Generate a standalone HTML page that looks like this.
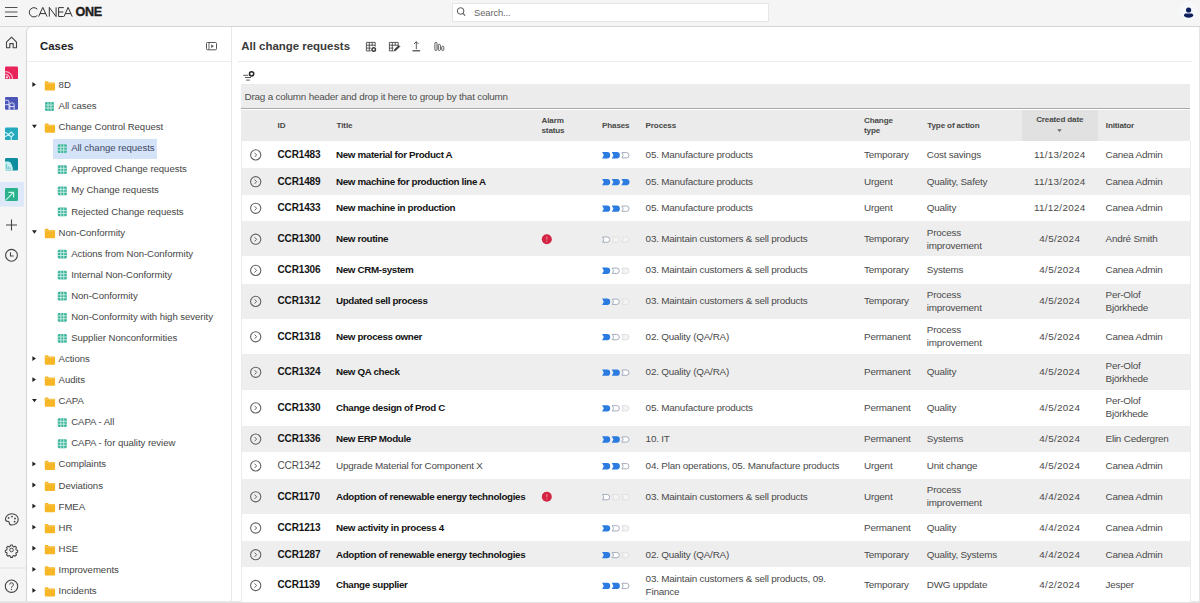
<!DOCTYPE html><html><head><meta charset="utf-8"><style>
*{box-sizing:border-box}
html,body{margin:0;padding:0}
body{width:1200px;height:603px;overflow:hidden;position:relative;background:#f5f5f5;font-family:"Liberation Sans",sans-serif;color:#444}
.a{position:absolute}
.t{position:absolute;white-space:nowrap;font-size:9.6px;line-height:12px;color:#484848;letter-spacing:-0.05px}
.c{position:absolute;white-space:nowrap;font-size:9.9px;line-height:13px;color:#4a4a4a;letter-spacing:-0.2px}
.b{font-weight:bold;color:#141414}
.tt{letter-spacing:-0.35px;font-size:9.8px}
.id{letter-spacing:-0.15px;font-size:10px}
.h{position:absolute;white-space:nowrap;font-size:8.1px;line-height:10px;font-weight:bold;color:#484848;letter-spacing:-0.15px}
.row{position:absolute;left:241px;width:949px}
.g{background:#eeeeee}
.w{background:#ffffff}
svg{position:absolute;overflow:visible}
</style></head><body>

<div class="a" style="left:0;top:0;width:1200px;height:26px;background:#f5f5f5"></div>
<div class="a" style="left:0;top:26px;width:1200px;height:1px;background:#d9d9d9"></div>
<svg style="left:0;top:0" width="30" height="26"><path d="M5 7.5h12.5M5 12h12.5M5 16.5h12.5" stroke="#505050" stroke-width="1.1"/></svg>
<svg style="left:0;top:0" width="120" height="26"><g fill="none" stroke="#2a2a2a" stroke-width="0.95"><path d="M37.3 9.2a4.6 4.6 0 1 0 0 6.2"/><path d="M38.6 16.6l4.2-9.2 4.2 9.2M40 13.6h5.6"/><path d="M49.3 16.6V7.4l6.8 9.2V7.4"/><path d="M63.8 7.6H58.6v8.9h5M58.6 12h4.7"/><path d="M64 16.6l4.1-9.2 4.1 9.2M65.4 13.6h5.4"/></g></svg>
<div class="a" style="left:75.5px;top:4px;font-size:12.6px;line-height:16px;font-weight:bold;color:#1e1e1e;letter-spacing:-0.3px;-webkit-text-stroke:0.35px #1e1e1e">ONE</div>
<div class="a" style="left:452px;top:3px;width:317px;height:18.5px;background:#fff;border:1px solid #e6e6e6"></div>
<svg style="left:0;top:0" width="1" height="1"><circle cx="460.6" cy="11" r="3.3" fill="none" stroke="#555" stroke-width="1"/><path d="M463 13.4l2.2 2.2" stroke="#555" stroke-width="1.1"/></svg>
<div class="a" style="left:474px;top:6.8px;font-size:9.4px;line-height:12px;color:#666;letter-spacing:-0.1px">Search...</div>
<svg style="left:0;top:0" width="1" height="1"><circle cx="1188.6" cy="11.3" r="9" fill="#f6f8fc"/><circle cx="1188.6" cy="10" r="2.6" fill="#0d1f5c"/><path d="M1184 15.3c0-1.2 1-1.8 2-1.8h5.2c1 0 2 .6 2 1.8 0 1.6-2 2.4-4.6 2.4s-4.6-.8-4.6-2.4z" fill="#0d1f5c"/></svg>
<svg style="left:0;top:0" width="1" height="1"><path d="M6.5 42.2l5-5 5 5v5.6h-3.3v-4.2h-3.4v4.2H6.5z" fill="none" stroke="#444" stroke-width="1.1" stroke-linejoin="round"/><rect x="5" y="66.5" width="13" height="12.6" rx="1.2" fill="#e8235a"/><path d="M5.2 71.6a7.2 7.2 0 0 1 7.3 7.3M5.2 74.4a4.4 4.4 0 0 1 4.5 4.5" fill="none" stroke="#f7b3c6" stroke-width="1.1"/><circle cx="6.9" cy="77.3" r="1.15" fill="#fbe3ea"/><rect x="5" y="97" width="13" height="12.7" rx="1.2" fill="#4a55b5"/><path d="M5.2 100.3h2.3a1.5 1.5 0 0 1 1.5 1.5v7.9M5.2 104.7h3.8M9.8 109.7v-5.2a1.5 1.5 0 0 1 1.5-1.5h1.3a1.5 1.5 0 0 1 1.5 1.5v5.2M9.8 106.6h4.3" fill="none" stroke="#dfe2fb" stroke-width="1"/><rect x="5" y="127.5" width="13" height="12.6" rx="1.2" fill="#26a8bd"/><path d="M5.2 132.2l3.4 2.3-3.4 2.3M8.6 134.5l2.6-2.5 2.6 2.5-2.6 2.5zM11.2 137v3" fill="none" stroke="#c9f4f8" stroke-width="1.15"/><rect x="5" y="158" width="13" height="12.5" rx="1.2" fill="#0f8c9e"/><path d="M5 161.6h3.6a5.2 8.9 0 0 1 4.4 8.9H5z" fill="#c2eef0"/><path d="M6.4 164v5M8.2 166.3v3.2M10.1 167.5v2" stroke="#5bb3bd" stroke-width="0.8"/><rect x="0" y="182" width="24" height="24.5" fill="#dde8f8"/><rect x="5" y="188" width="13" height="13" rx="1.2" fill="#2bb28c"/><path d="M8.3 192.3h5.3v5.3" fill="none" stroke="#c8f5e6" stroke-width="1.2"/><path d="M5.6 200.3l7.6-7.6" stroke="#c8f5e6" stroke-width="1.2"/><path d="M11.5 219.5v11M6 225h11" stroke="#444" stroke-width="1.1"/><circle cx="11.5" cy="255.3" r="5.9" fill="none" stroke="#444" stroke-width="1.1"/><path d="M10.5 252.3v3.7h3.2" fill="none" stroke="#444" stroke-width="1.1"/><path d="M11.8 513.8c-3.6 0-6.3 2.6-6.3 5.4 0 1.5 1 2.2 2.2 2.2 1.1 0 1.6.8 1.6 1.6 0 1.3 1 2 2.6 2 3.5 0 6.3-2.5 6.3-5.6s-2.8-5.6-6.4-5.6z" fill="none" stroke="#444" stroke-width="1.1"/><circle cx="8.6" cy="517.9" r="0.9" fill="#444"/><circle cx="12" cy="516.6" r="0.9" fill="#444"/><circle cx="15" cy="518.5" r="0.9" fill="#444"/><circle cx="14.6" cy="521.7" r="0.9" fill="#444"/><g transform="translate(11.5 550) scale(0.82)"><path d="M-1.2-6h2.4l.4 1.7 1.3.6 1.5-.9 1.7 1.7-.9 1.5.6 1.3 1.7.4v2.4l-1.7.4-.6 1.3.9 1.5-1.7 1.7-1.5-.9-1.3.6-.4 1.7h-2.4l-.4-1.7-1.3-.6-1.5.9-1.7-1.7.9-1.5-.6-1.3-1.7-.4v-2.4l1.7-.4.6-1.3-.9-1.5 1.7-1.7 1.5.9 1.3-.6z" fill="none" stroke="#444" stroke-width="1.25" stroke-linejoin="round"/><circle r="2.2" fill="none" stroke="#444" stroke-width="1.2"/></g><rect x="0" y="567.5" width="26" height="1" fill="#e2e2e2"/><circle cx="11.5" cy="586.2" r="6.2" fill="none" stroke="#444" stroke-width="1.1"/><path d="M9.6 584.6a1.9 1.9 0 1 1 2.6 1.8c-.5.2-.7.5-.7 1v.6" fill="none" stroke="#444" stroke-width="1"/><circle cx="11.5" cy="589.4" r="0.65" fill="#444"/></svg>
<div class="a" style="left:26px;top:26px;width:1180px;height:580px;background:#fff;border:1px solid #d6d6d6;border-radius:6px 0 0 0"></div>
<div class="a" style="left:1198.5px;top:27px;width:1px;height:576px;background:#e4e4e4"></div>
<div class="a" style="left:0;top:601px;width:1200px;height:2px;background:#e6e6e6"></div>
<div class="a" style="left:40px;top:38px;font-size:11.4px;line-height:16px;font-weight:bold;color:#1e1e1e">Cases</div>
<svg style="left:0;top:0" width="1" height="1"><rect x="206.5" y="42.5" width="10" height="7.3" rx="1" fill="none" stroke="#555" stroke-width="1"/><path d="M209 43v6.5" stroke="#555" stroke-width="0.9"/><path d="M211.2 44.3l2.7 1.9-2.7 1.9z" fill="#555"/></svg>
<div class="a" style="left:27px;top:61px;width:205px;height:1px;background:#ececec"></div>
<div class="a" style="left:231.3px;top:27px;width:1px;height:576px;background:#e8e8e8"></div>
<div class="a" style="left:52.5px;top:138.5px;width:104.5px;height:20px;background:#d5e3f8"></div>
<div class="t" style="left:58.6px;top:79.0px;color:#454545">8D</div>
<div class="t" style="left:58.6px;top:100.1px;color:#454545">All cases</div>
<div class="t" style="left:58.6px;top:121.2px;color:#454545">Change Control Request</div>
<div class="t" style="left:71.2px;top:142.2px;color:#3d4763">All change requests</div>
<div class="t" style="left:71.2px;top:163.3px;color:#454545">Approved Change requests</div>
<div class="t" style="left:71.2px;top:184.4px;color:#454545">My Change requests</div>
<div class="t" style="left:71.2px;top:205.5px;color:#454545">Rejected Change requests</div>
<div class="t" style="left:58.6px;top:226.6px;color:#454545">Non-Conformity</div>
<div class="t" style="left:71.2px;top:247.6px;color:#454545">Actions from Non-Conformity</div>
<div class="t" style="left:71.2px;top:268.7px;color:#454545">Internal Non-Conformity</div>
<div class="t" style="left:71.2px;top:289.8px;color:#454545">Non-Conformity</div>
<div class="t" style="left:71.2px;top:310.9px;color:#454545">Non-Conformity with high severity</div>
<div class="t" style="left:71.2px;top:332.0px;color:#454545">Supplier Nonconformities</div>
<div class="t" style="left:58.6px;top:353.0px;color:#454545">Actions</div>
<div class="t" style="left:58.6px;top:374.1px;color:#454545">Audits</div>
<div class="t" style="left:58.6px;top:395.2px;color:#454545">CAPA</div>
<div class="t" style="left:71.2px;top:416.3px;color:#454545">CAPA - All</div>
<div class="t" style="left:71.2px;top:437.4px;color:#454545">CAPA - for quality review</div>
<div class="t" style="left:58.6px;top:458.4px;color:#454545">Complaints</div>
<div class="t" style="left:58.6px;top:479.5px;color:#454545">Deviations</div>
<div class="t" style="left:58.6px;top:500.6px;color:#454545">FMEA</div>
<div class="t" style="left:58.6px;top:521.7px;color:#454545">HR</div>
<div class="t" style="left:58.6px;top:542.8px;color:#454545">HSE</div>
<div class="t" style="left:58.6px;top:563.8px;color:#454545">Improvements</div>
<div class="t" style="left:58.6px;top:584.9px;color:#454545">Incidents</div>
<svg style="left:0;top:0" width="1" height="1"><path d="M44.8 81.3h3l1.1 1.2h5.2a1 1 0 0 1 1 1v6.1a1 1 0 0 1-1 1h-8.3a1 1 0 0 1-1-1v-7.3a1 1 0 0 1 1-1z" fill="#f6b626"/><path d="M44.099999999999994 83.3h9.9" stroke="#fbd37a" stroke-width="0.6"/><path d="M32.4 82.1l3.6 2.4-3.6 2.4z" fill="#222"/><rect x="45" y="102.08" width="9" height="8.8" rx="1.3" fill="#3bb59b"/><path d="M48.05 102.08v8.8M50.95 102.08v8.8M45 105.06h9M45 107.96h9" stroke="#e6f7f2" stroke-width="0.75"/><path d="M44.8 123.46h3l1.1 1.2h5.2a1 1 0 0 1 1 1v6.1a1 1 0 0 1-1 1h-8.3a1 1 0 0 1-1-1v-7.3a1 1 0 0 1 1-1z" fill="#f6b626"/><path d="M44.099999999999994 125.46h9.9" stroke="#fbd37a" stroke-width="0.6"/><path d="M32 124.86h4.8l-2.4 3.4z" fill="#222"/><rect x="57.8" y="144.24" width="9" height="8.8" rx="1.3" fill="#3bb59b"/><path d="M60.849999999999994 144.24v8.8M63.75 144.24v8.8M57.8 147.22h9M57.8 150.12h9" stroke="#e6f7f2" stroke-width="0.75"/><rect x="57.8" y="165.32" width="9" height="8.8" rx="1.3" fill="#3bb59b"/><path d="M60.849999999999994 165.32v8.8M63.75 165.32v8.8M57.8 168.30h9M57.8 171.20h9" stroke="#e6f7f2" stroke-width="0.75"/><rect x="57.8" y="186.40" width="9" height="8.8" rx="1.3" fill="#3bb59b"/><path d="M60.849999999999994 186.40v8.8M63.75 186.40v8.8M57.8 189.38h9M57.8 192.28h9" stroke="#e6f7f2" stroke-width="0.75"/><rect x="57.8" y="207.48" width="9" height="8.8" rx="1.3" fill="#3bb59b"/><path d="M60.849999999999994 207.48v8.8M63.75 207.48v8.8M57.8 210.46h9M57.8 213.36h9" stroke="#e6f7f2" stroke-width="0.75"/><path d="M44.8 228.86h3l1.1 1.2h5.2a1 1 0 0 1 1 1v6.1a1 1 0 0 1-1 1h-8.3a1 1 0 0 1-1-1v-7.3a1 1 0 0 1 1-1z" fill="#f6b626"/><path d="M44.099999999999994 230.86h9.9" stroke="#fbd37a" stroke-width="0.6"/><path d="M32 230.26h4.8l-2.4 3.4z" fill="#222"/><rect x="57.8" y="249.64" width="9" height="8.8" rx="1.3" fill="#3bb59b"/><path d="M60.849999999999994 249.64v8.8M63.75 249.64v8.8M57.8 252.62h9M57.8 255.52h9" stroke="#e6f7f2" stroke-width="0.75"/><rect x="57.8" y="270.72" width="9" height="8.8" rx="1.3" fill="#3bb59b"/><path d="M60.849999999999994 270.72v8.8M63.75 270.72v8.8M57.8 273.70h9M57.8 276.60h9" stroke="#e6f7f2" stroke-width="0.75"/><rect x="57.8" y="291.80" width="9" height="8.8" rx="1.3" fill="#3bb59b"/><path d="M60.849999999999994 291.80v8.8M63.75 291.80v8.8M57.8 294.78h9M57.8 297.68h9" stroke="#e6f7f2" stroke-width="0.75"/><rect x="57.8" y="312.88" width="9" height="8.8" rx="1.3" fill="#3bb59b"/><path d="M60.849999999999994 312.88v8.8M63.75 312.88v8.8M57.8 315.86h9M57.8 318.76h9" stroke="#e6f7f2" stroke-width="0.75"/><rect x="57.8" y="333.96" width="9" height="8.8" rx="1.3" fill="#3bb59b"/><path d="M60.849999999999994 333.96v8.8M63.75 333.96v8.8M57.8 336.94h9M57.8 339.84h9" stroke="#e6f7f2" stroke-width="0.75"/><path d="M44.8 355.34h3l1.1 1.2h5.2a1 1 0 0 1 1 1v6.1a1 1 0 0 1-1 1h-8.3a1 1 0 0 1-1-1v-7.3a1 1 0 0 1 1-1z" fill="#f6b626"/><path d="M44.099999999999994 357.34h9.9" stroke="#fbd37a" stroke-width="0.6"/><path d="M32.4 356.14l3.6 2.4-3.6 2.4z" fill="#222"/><path d="M44.8 376.42h3l1.1 1.2h5.2a1 1 0 0 1 1 1v6.1a1 1 0 0 1-1 1h-8.3a1 1 0 0 1-1-1v-7.3a1 1 0 0 1 1-1z" fill="#f6b626"/><path d="M44.099999999999994 378.42h9.9" stroke="#fbd37a" stroke-width="0.6"/><path d="M32.4 377.22l3.6 2.4-3.6 2.4z" fill="#222"/><path d="M44.8 397.5h3l1.1 1.2h5.2a1 1 0 0 1 1 1v6.1a1 1 0 0 1-1 1h-8.3a1 1 0 0 1-1-1v-7.3a1 1 0 0 1 1-1z" fill="#f6b626"/><path d="M44.099999999999994 399.5h9.9" stroke="#fbd37a" stroke-width="0.6"/><path d="M32 398.9h4.8l-2.4 3.4z" fill="#222"/><rect x="57.8" y="418.28" width="9" height="8.8" rx="1.3" fill="#3bb59b"/><path d="M60.849999999999994 418.28v8.8M63.75 418.28v8.8M57.8 421.26h9M57.8 424.16h9" stroke="#e6f7f2" stroke-width="0.75"/><rect x="57.8" y="439.36" width="9" height="8.8" rx="1.3" fill="#3bb59b"/><path d="M60.849999999999994 439.36v8.8M63.75 439.36v8.8M57.8 442.34h9M57.8 445.24h9" stroke="#e6f7f2" stroke-width="0.75"/><path d="M44.8 460.73999999999995h3l1.1 1.2h5.2a1 1 0 0 1 1 1v6.1a1 1 0 0 1-1 1h-8.3a1 1 0 0 1-1-1v-7.3a1 1 0 0 1 1-1z" fill="#f6b626"/><path d="M44.099999999999994 462.73999999999995h9.9" stroke="#fbd37a" stroke-width="0.6"/><path d="M32.4 461.53999999999996l3.6 2.4-3.6 2.4z" fill="#222"/><path d="M44.8 481.82h3l1.1 1.2h5.2a1 1 0 0 1 1 1v6.1a1 1 0 0 1-1 1h-8.3a1 1 0 0 1-1-1v-7.3a1 1 0 0 1 1-1z" fill="#f6b626"/><path d="M44.099999999999994 483.82h9.9" stroke="#fbd37a" stroke-width="0.6"/><path d="M32.4 482.62l3.6 2.4-3.6 2.4z" fill="#222"/><path d="M44.8 502.9h3l1.1 1.2h5.2a1 1 0 0 1 1 1v6.1a1 1 0 0 1-1 1h-8.3a1 1 0 0 1-1-1v-7.3a1 1 0 0 1 1-1z" fill="#f6b626"/><path d="M44.099999999999994 504.9h9.9" stroke="#fbd37a" stroke-width="0.6"/><path d="M32.4 503.7l3.6 2.4-3.6 2.4z" fill="#222"/><path d="M44.8 523.9799999999999h3l1.1 1.2h5.2a1 1 0 0 1 1 1v6.1a1 1 0 0 1-1 1h-8.3a1 1 0 0 1-1-1v-7.3a1 1 0 0 1 1-1z" fill="#f6b626"/><path d="M44.099999999999994 525.9799999999999h9.9" stroke="#fbd37a" stroke-width="0.6"/><path d="M32.4 524.78l3.6 2.4-3.6 2.4z" fill="#222"/><path d="M44.8 545.06h3l1.1 1.2h5.2a1 1 0 0 1 1 1v6.1a1 1 0 0 1-1 1h-8.3a1 1 0 0 1-1-1v-7.3a1 1 0 0 1 1-1z" fill="#f6b626"/><path d="M44.099999999999994 547.06h9.9" stroke="#fbd37a" stroke-width="0.6"/><path d="M32.4 545.86l3.6 2.4-3.6 2.4z" fill="#222"/><path d="M44.8 566.1399999999999h3l1.1 1.2h5.2a1 1 0 0 1 1 1v6.1a1 1 0 0 1-1 1h-8.3a1 1 0 0 1-1-1v-7.3a1 1 0 0 1 1-1z" fill="#f6b626"/><path d="M44.099999999999994 568.1399999999999h9.9" stroke="#fbd37a" stroke-width="0.6"/><path d="M32.4 566.9399999999999l3.6 2.4-3.6 2.4z" fill="#222"/><path d="M44.8 587.2199999999999h3l1.1 1.2h5.2a1 1 0 0 1 1 1v6.1a1 1 0 0 1-1 1h-8.3a1 1 0 0 1-1-1v-7.3a1 1 0 0 1 1-1z" fill="#f6b626"/><path d="M44.099999999999994 589.2199999999999h9.9" stroke="#fbd37a" stroke-width="0.6"/><path d="M32.4 588.02l3.6 2.4-3.6 2.4z" fill="#222"/></svg>
<div class="a" style="left:241.3px;top:38px;font-size:11.45px;line-height:16px;font-weight:bold;color:#3a3a3a">All change requests</div>
<svg style="left:0;top:0" width="1" height="1"><g fill="none" stroke="#3e3e3e" stroke-width="0.85"><path d="M366.4 42.4h8.8v4.2M366.4 42.4v8.5h4.4M366.4 45.2h8.8M366.4 48.1h4.4M369.3 42.4v8.5M372.2 42.4v3.5"/><circle cx="373.7" cy="49.4" r="1.75" stroke-width="1.5"/><path d="M389.4 42.4h8.8v3.6M389.4 42.4v8.5h4.2M389.4 45.2h8.8M389.4 48.1h4M392.3 42.4v8.5M395.2 42.4v3"/><path d="M394.2 51l.5-1.7 4-4 1.2 1.2-4 4z" fill="#3e3e3e" stroke-width="0.6"/><path d="M416.3 49.2v-7.4M414 44l2.3-2.3 2.3 2.3"/><path d="M412.5 50.8h7.6" stroke-width="1.2"/><rect x="434.9" y="42.3" width="2.1" height="8.2" rx="1"/><rect x="438.3" y="44.3" width="2.1" height="6.2" rx="1"/><rect x="441.7" y="46.3" width="2.1" height="4.2" rx="1"/></g></svg>
<div class="a" style="left:238px;top:61px;width:954px;height:1px;background:#ececec"></div>
<svg style="left:0;top:0" width="1" height="1"><g stroke="#555" stroke-width="0.9" fill="none"><path d="M243.3 75.3h5M245 77.5h6M246.2 80.1h3.6" stroke-width="1"/><circle cx="251.6" cy="73.8" r="2.1" stroke-width="1.5" stroke="#222"/></g></svg>
<div class="a" style="left:241px;top:84.3px;width:949px;height:25px;background:#ececec;border-bottom:1px solid #a8a8a8"></div>
<div class="c" style="left:244.5px;top:89.7px;color:#4e4e4e">Drag a column header and drop it here to group by that column</div>
<div class="a" style="left:241px;top:109.5px;width:949px;height:31.5px;background:#ebebeb"></div>
<div class="a" style="left:1022px;top:109.5px;width:75.5px;height:31.5px;background:#e1e1e1"></div>
<div class="h" style="left:277.6px;top:120.8px">ID</div>
<div class="h" style="left:336.6px;top:120.8px">Title</div>
<div class="h" style="left:541.5px;top:115.6px">Alarm<br>status</div>
<div class="h" style="left:602px;top:120.8px">Phases</div>
<div class="h" style="left:645.6px;top:120.8px">Process</div>
<div class="h" style="left:864px;top:115.6px">Change<br>type</div>
<div class="h" style="left:927.3px;top:120.8px">Type of action</div>
<div class="h" style="left:1105.8px;top:120.8px">Initiator</div>
<div class="h" style="left:1022px;width:75.5px;text-align:center;top:115px">Created date</div>
<svg style="left:0;top:0" width="1" height="1"><path d="M1057.3 129.2h4.4l-2.2 2.8z" fill="#666"/></svg>
<div class="row w" style="top:141px;height:27px"></div>
<div class="c b id" style="left:277.5px;top:147.7px">CCR1483</div>
<div class="c b tt" style="left:336px;top:147.7px">New material for Product A</div>
<div class="c" style="left:645.6px;top:147.7px">05. Manufacture products</div>
<div class="c" style="left:864px;top:147.7px">Temporary</div>
<div class="c" style="left:926.8px;top:147.7px">Cost savings</div>
<div class="c" style="left:1022px;width:75.5px;text-align:center;letter-spacing:0.3px;top:147.7px">11/13/2024</div>
<div class="c" style="left:1105.5px;top:147.7px">Canea Admin</div>
<svg style="left:0;top:0" width="1" height="1"><circle cx="255.7" cy="154.9" r="5.1" fill="none" stroke="#646464" stroke-width="1.1"/><path d="M254.6 152.8l2 2.1-2 2.1" fill="none" stroke="#646464" stroke-width="1"/><path d="M602.10 152.10h5.1a3 3.15 0 0 1 0 6.3H602.10l1.7-3.15z" fill="#2b7be0"/><path d="M611.75 152.10h5.1a3 3.15 0 0 1 0 6.3H611.75l1.7-3.15z" fill="#2b7be0"/><path d="M621.90 152.60h4.6a2.5 2.65 0 0 1 0 5.3H621.90l1.3-2.65z" fill="#fff" stroke="#a3adbd" stroke-width="1"/></svg>
<div class="row g" style="top:168px;height:26.599999999999994px"></div>
<div class="c b id" style="left:277.5px;top:174.5px">CCR1489</div>
<div class="c b tt" style="left:336px;top:174.5px">New machine for production line A</div>
<div class="c" style="left:645.6px;top:174.5px">05. Manufacture products</div>
<div class="c" style="left:864px;top:174.5px">Urgent</div>
<div class="c" style="left:926.8px;top:174.5px">Quality, Safety</div>
<div class="c" style="left:1022px;width:75.5px;text-align:center;letter-spacing:0.3px;top:174.5px">11/13/2024</div>
<div class="c" style="left:1105.5px;top:174.5px">Canea Admin</div>
<svg style="left:0;top:0" width="1" height="1"><circle cx="255.7" cy="181.7" r="5.1" fill="none" stroke="#646464" stroke-width="1.1"/><path d="M254.6 179.6l2 2.1-2 2.1" fill="none" stroke="#646464" stroke-width="1"/><path d="M602.10 178.90h5.1a3 3.15 0 0 1 0 6.3H602.10l1.7-3.15z" fill="#2b7be0"/><path d="M611.75 178.90h5.1a3 3.15 0 0 1 0 6.3H611.75l1.7-3.15z" fill="#2b7be0"/><path d="M621.40 178.90h5.1a3 3.15 0 0 1 0 6.3H621.40l1.7-3.15z" fill="#2b7be0"/></svg>
<div class="row w" style="top:194.6px;height:26.599999999999994px"></div>
<div class="c b id" style="left:277.5px;top:201.1px">CCR1433</div>
<div class="c b tt" style="left:336px;top:201.1px">New machine in production</div>
<div class="c" style="left:645.6px;top:201.1px">05. Manufacture products</div>
<div class="c" style="left:864px;top:201.1px">Urgent</div>
<div class="c" style="left:926.8px;top:201.1px">Quality</div>
<div class="c" style="left:1022px;width:75.5px;text-align:center;letter-spacing:0.3px;top:201.1px">11/12/2024</div>
<div class="c" style="left:1105.5px;top:201.1px">Canea Admin</div>
<svg style="left:0;top:0" width="1" height="1"><circle cx="255.7" cy="208.3" r="5.1" fill="none" stroke="#646464" stroke-width="1.1"/><path d="M254.6 206.2l2 2.1-2 2.1" fill="none" stroke="#646464" stroke-width="1"/><path d="M602.10 205.50h5.1a3 3.15 0 0 1 0 6.3H602.10l1.7-3.15z" fill="#2b7be0"/><path d="M611.75 205.50h5.1a3 3.15 0 0 1 0 6.3H611.75l1.7-3.15z" fill="#2b7be0"/><path d="M621.90 206.00h4.6a2.5 2.65 0 0 1 0 5.3H621.90l1.3-2.65z" fill="#fff" stroke="#a3adbd" stroke-width="1"/></svg>
<div class="row g" style="top:221.2px;height:35.30000000000001px"></div>
<div class="c b id" style="left:277.5px;top:232.0px">CCR1300</div>
<div class="c b tt" style="left:336px;top:232.0px">New routine</div>
<div class="c" style="left:645.6px;top:232.0px">03. Maintain customers &amp; sell products</div>
<div class="c" style="left:864px;top:232.0px">Temporary</div>
<div class="c" style="left:926.8px;top:225.5px">Process<br>improvement</div>
<div class="c" style="left:1022px;width:75.5px;text-align:center;letter-spacing:0.3px;top:232.0px">4/5/2024</div>
<div class="c" style="left:1105.5px;top:232.0px">Andr&eacute; Smith</div>
<svg style="left:0;top:0" width="1" height="1"><circle cx="255.7" cy="239.2" r="5.1" fill="none" stroke="#646464" stroke-width="1.1"/><path d="M254.6 237.2l2 2.1-2 2.1" fill="none" stroke="#646464" stroke-width="1"/><circle cx="546.8" cy="239.2" r="5" fill="#d42443"/><path d="M546.8 236.5v2.9" stroke="#f27d93" stroke-width="1.2"/><circle cx="546.8" cy="241.2" r="0.65" fill="#f27d93"/><path d="M602.60 236.95h4.6a2.5 2.65 0 0 1 0 5.3H602.60l1.3-2.65z" fill="#fff" stroke="#a3adbd" stroke-width="1"/><path d="M612.25 236.95h4.6a2.5 2.65 0 0 1 0 5.3H612.25l1.3-2.65z" fill="#f4f4f4" stroke="#e0e0e0" stroke-width="1"/><path d="M621.90 236.95h4.6a2.5 2.65 0 0 1 0 5.3H621.90l1.3-2.65z" fill="#f4f4f4" stroke="#e0e0e0" stroke-width="1"/></svg>
<div class="row w" style="top:256.5px;height:27.0px"></div>
<div class="c b id" style="left:277.5px;top:263.2px">CCR1306</div>
<div class="c b tt" style="left:336px;top:263.2px">New CRM-system</div>
<div class="c" style="left:645.6px;top:263.2px">03. Maintain customers &amp; sell products</div>
<div class="c" style="left:864px;top:263.2px">Temporary</div>
<div class="c" style="left:926.8px;top:263.2px">Systems</div>
<div class="c" style="left:1022px;width:75.5px;text-align:center;letter-spacing:0.3px;top:263.2px">4/5/2024</div>
<div class="c" style="left:1105.5px;top:263.2px">Canea Admin</div>
<svg style="left:0;top:0" width="1" height="1"><circle cx="255.7" cy="270.4" r="5.1" fill="none" stroke="#646464" stroke-width="1.1"/><path d="M254.6 268.3l2 2.1-2 2.1" fill="none" stroke="#646464" stroke-width="1"/><path d="M602.10 267.60h5.1a3 3.15 0 0 1 0 6.3H602.10l1.7-3.15z" fill="#2b7be0"/><path d="M612.25 268.10h4.6a2.5 2.65 0 0 1 0 5.3H612.25l1.3-2.65z" fill="#fff" stroke="#a3adbd" stroke-width="1"/><path d="M621.90 268.10h4.6a2.5 2.65 0 0 1 0 5.3H621.90l1.3-2.65z" fill="#f4f4f4" stroke="#e0e0e0" stroke-width="1"/></svg>
<div class="row g" style="top:283.5px;height:35.0px"></div>
<div class="c b id" style="left:277.5px;top:294.2px">CCR1312</div>
<div class="c b tt" style="left:336px;top:294.2px">Updated sell process</div>
<div class="c" style="left:645.6px;top:294.2px">03. Maintain customers &amp; sell products</div>
<div class="c" style="left:864px;top:294.2px">Temporary</div>
<div class="c" style="left:926.8px;top:287.7px">Process<br>improvement</div>
<div class="c" style="left:1022px;width:75.5px;text-align:center;letter-spacing:0.3px;top:294.2px">4/5/2024</div>
<div class="c" style="left:1105.5px;top:287.7px">Per-Olof<br>Bj&ouml;rkhede</div>
<svg style="left:0;top:0" width="1" height="1"><circle cx="255.7" cy="301.4" r="5.1" fill="none" stroke="#646464" stroke-width="1.1"/><path d="M254.6 299.3l2 2.1-2 2.1" fill="none" stroke="#646464" stroke-width="1"/><path d="M602.10 298.60h5.1a3 3.15 0 0 1 0 6.3H602.10l1.7-3.15z" fill="#2b7be0"/><path d="M612.25 299.10h4.6a2.5 2.65 0 0 1 0 5.3H612.25l1.3-2.65z" fill="#fff" stroke="#a3adbd" stroke-width="1"/><path d="M621.90 299.10h4.6a2.5 2.65 0 0 1 0 5.3H621.90l1.3-2.65z" fill="#f4f4f4" stroke="#e0e0e0" stroke-width="1"/></svg>
<div class="row w" style="top:318.5px;height:35.69999999999999px"></div>
<div class="c b id" style="left:277.5px;top:329.6px">CCR1318</div>
<div class="c b tt" style="left:336px;top:329.6px">New process owner</div>
<div class="c" style="left:645.6px;top:329.6px">02. Quality (QA/RA)</div>
<div class="c" style="left:864px;top:329.6px">Permanent</div>
<div class="c" style="left:926.8px;top:323.1px">Process<br>improvement</div>
<div class="c" style="left:1022px;width:75.5px;text-align:center;letter-spacing:0.3px;top:329.6px">4/5/2024</div>
<div class="c" style="left:1105.5px;top:329.6px">Canea Admin</div>
<svg style="left:0;top:0" width="1" height="1"><circle cx="255.7" cy="336.8" r="5.1" fill="none" stroke="#646464" stroke-width="1.1"/><path d="M254.6 334.6l2 2.1-2 2.1" fill="none" stroke="#646464" stroke-width="1"/><path d="M602.10 333.95h5.1a3 3.15 0 0 1 0 6.3H602.10l1.7-3.15z" fill="#2b7be0"/><path d="M612.25 334.45h4.6a2.5 2.65 0 0 1 0 5.3H612.25l1.3-2.65z" fill="#fff" stroke="#a3adbd" stroke-width="1"/><path d="M621.90 334.45h4.6a2.5 2.65 0 0 1 0 5.3H621.90l1.3-2.65z" fill="#f4f4f4" stroke="#e0e0e0" stroke-width="1"/></svg>
<div class="row g" style="top:354.2px;height:35.400000000000034px"></div>
<div class="c b id" style="left:277.5px;top:365.1px">CCR1324</div>
<div class="c b tt" style="left:336px;top:365.1px">New QA check</div>
<div class="c" style="left:645.6px;top:365.1px">02. Quality (QA/RA)</div>
<div class="c" style="left:864px;top:365.1px">Permanent</div>
<div class="c" style="left:926.8px;top:365.1px">Quality</div>
<div class="c" style="left:1022px;width:75.5px;text-align:center;letter-spacing:0.3px;top:365.1px">4/5/2024</div>
<div class="c" style="left:1105.5px;top:358.6px">Per-Olof<br>Bj&ouml;rkhede</div>
<svg style="left:0;top:0" width="1" height="1"><circle cx="255.7" cy="372.3" r="5.1" fill="none" stroke="#646464" stroke-width="1.1"/><path d="M254.6 370.2l2 2.1-2 2.1" fill="none" stroke="#646464" stroke-width="1"/><path d="M602.10 369.50h5.1a3 3.15 0 0 1 0 6.3H602.10l1.7-3.15z" fill="#2b7be0"/><path d="M611.75 369.50h5.1a3 3.15 0 0 1 0 6.3H611.75l1.7-3.15z" fill="#2b7be0"/><path d="M621.90 370.00h4.6a2.5 2.65 0 0 1 0 5.3H621.90l1.3-2.65z" fill="#fff" stroke="#a3adbd" stroke-width="1"/></svg>
<div class="row w" style="top:389.6px;height:35.89999999999998px"></div>
<div class="c b id" style="left:277.5px;top:400.8px">CCR1330</div>
<div class="c b tt" style="left:336px;top:400.8px">Change design of Prod C</div>
<div class="c" style="left:645.6px;top:400.8px">05. Manufacture products</div>
<div class="c" style="left:864px;top:400.8px">Permanent</div>
<div class="c" style="left:926.8px;top:400.8px">Quality</div>
<div class="c" style="left:1022px;width:75.5px;text-align:center;letter-spacing:0.3px;top:400.8px">4/5/2024</div>
<div class="c" style="left:1105.5px;top:394.2px">Per-Olof<br>Bj&ouml;rkhede</div>
<svg style="left:0;top:0" width="1" height="1"><circle cx="255.7" cy="407.9" r="5.1" fill="none" stroke="#646464" stroke-width="1.1"/><path d="M254.6 405.8l2 2.1-2 2.1" fill="none" stroke="#646464" stroke-width="1"/><path d="M602.10 405.15h5.1a3 3.15 0 0 1 0 6.3H602.10l1.7-3.15z" fill="#2b7be0"/><path d="M612.25 405.65h4.6a2.5 2.65 0 0 1 0 5.3H612.25l1.3-2.65z" fill="#fff" stroke="#a3adbd" stroke-width="1"/><path d="M621.90 405.65h4.6a2.5 2.65 0 0 1 0 5.3H621.90l1.3-2.65z" fill="#f4f4f4" stroke="#e0e0e0" stroke-width="1"/></svg>
<div class="row g" style="top:425.5px;height:26.5px"></div>
<div class="c b id" style="left:277.5px;top:431.9px">CCR1336</div>
<div class="c b tt" style="left:336px;top:431.9px">New ERP Module</div>
<div class="c" style="left:645.6px;top:431.9px">10. IT</div>
<div class="c" style="left:864px;top:431.9px">Permanent</div>
<div class="c" style="left:926.8px;top:431.9px">Systems</div>
<div class="c" style="left:1022px;width:75.5px;text-align:center;letter-spacing:0.3px;top:431.9px">4/5/2024</div>
<div class="c" style="left:1105.5px;top:431.9px">Elin Cedergren</div>
<svg style="left:0;top:0" width="1" height="1"><circle cx="255.7" cy="439.1" r="5.1" fill="none" stroke="#646464" stroke-width="1.1"/><path d="M254.6 437.0l2 2.1-2 2.1" fill="none" stroke="#646464" stroke-width="1"/><path d="M602.10 436.35h5.1a3 3.15 0 0 1 0 6.3H602.10l1.7-3.15z" fill="#2b7be0"/><path d="M611.75 436.35h5.1a3 3.15 0 0 1 0 6.3H611.75l1.7-3.15z" fill="#2b7be0"/><path d="M621.90 436.85h4.6a2.5 2.65 0 0 1 0 5.3H621.90l1.3-2.65z" fill="#fff" stroke="#a3adbd" stroke-width="1"/></svg>
<div class="row w" style="top:452px;height:27px"></div>
<div class="c id" style="left:277.5px;top:458.7px">CCR1342</div>
<div class="c" style="left:336px;top:458.7px">Upgrade Material for Component X</div>
<div class="c" style="left:645.6px;top:458.7px">04. Plan operations, 05. Manufacture products</div>
<div class="c" style="left:864px;top:458.7px">Urgent</div>
<div class="c" style="left:926.8px;top:458.7px">Unit change</div>
<div class="c" style="left:1022px;width:75.5px;text-align:center;letter-spacing:0.3px;top:458.7px">4/5/2024</div>
<div class="c" style="left:1105.5px;top:458.7px">Canea Admin</div>
<svg style="left:0;top:0" width="1" height="1"><circle cx="255.7" cy="465.9" r="5.1" fill="none" stroke="#646464" stroke-width="1.1"/><path d="M254.6 463.8l2 2.1-2 2.1" fill="none" stroke="#646464" stroke-width="1"/><path d="M602.10 463.10h5.1a3 3.15 0 0 1 0 6.3H602.10l1.7-3.15z" fill="#2b7be0"/><path d="M611.75 463.10h5.1a3 3.15 0 0 1 0 6.3H611.75l1.7-3.15z" fill="#2b7be0"/><path d="M621.90 463.60h4.6a2.5 2.65 0 0 1 0 5.3H621.90l1.3-2.65z" fill="#fff" stroke="#a3adbd" stroke-width="1"/></svg>
<div class="row g" style="top:479px;height:34.799999999999955px"></div>
<div class="c b id" style="left:277.5px;top:489.6px">CCR1170</div>
<div class="c b tt" style="left:336px;top:489.6px">Adoption of renewable energy technologies</div>
<div class="c" style="left:645.6px;top:489.6px">03. Maintain customers &amp; sell products</div>
<div class="c" style="left:864px;top:489.6px">Urgent</div>
<div class="c" style="left:926.8px;top:483.1px">Process<br>improvement</div>
<div class="c" style="left:1022px;width:75.5px;text-align:center;letter-spacing:0.3px;top:489.6px">4/4/2024</div>
<div class="c" style="left:1105.5px;top:489.6px">Canea Admin</div>
<svg style="left:0;top:0" width="1" height="1"><circle cx="255.7" cy="496.8" r="5.1" fill="none" stroke="#646464" stroke-width="1.1"/><path d="M254.6 494.7l2 2.1-2 2.1" fill="none" stroke="#646464" stroke-width="1"/><circle cx="546.8" cy="496.7" r="5" fill="#d42443"/><path d="M546.8 494.1v2.9" stroke="#f27d93" stroke-width="1.2"/><circle cx="546.8" cy="498.8" r="0.65" fill="#f27d93"/><path d="M602.60 494.50h4.6a2.5 2.65 0 0 1 0 5.3H602.60l1.3-2.65z" fill="#fff" stroke="#a3adbd" stroke-width="1"/><path d="M612.25 494.50h4.6a2.5 2.65 0 0 1 0 5.3H612.25l1.3-2.65z" fill="#f4f4f4" stroke="#e0e0e0" stroke-width="1"/><path d="M621.90 494.50h4.6a2.5 2.65 0 0 1 0 5.3H621.90l1.3-2.65z" fill="#f4f4f4" stroke="#e0e0e0" stroke-width="1"/></svg>
<div class="row w" style="top:513.8px;height:27.600000000000023px"></div>
<div class="c b id" style="left:277.5px;top:520.8px">CCR1213</div>
<div class="c b tt" style="left:336px;top:520.8px">New activity in process 4</div>
<div class="c" style="left:645.6px;top:520.8px"></div>
<div class="c" style="left:864px;top:520.8px">Permanent</div>
<div class="c" style="left:926.8px;top:520.8px">Quality</div>
<div class="c" style="left:1022px;width:75.5px;text-align:center;letter-spacing:0.3px;top:520.8px">4/4/2024</div>
<div class="c" style="left:1105.5px;top:520.8px">Canea Admin</div>
<svg style="left:0;top:0" width="1" height="1"><circle cx="255.7" cy="528.0" r="5.1" fill="none" stroke="#646464" stroke-width="1.1"/><path d="M254.6 525.9l2 2.1-2 2.1" fill="none" stroke="#646464" stroke-width="1"/><path d="M602.10 525.20h5.1a3 3.15 0 0 1 0 6.3H602.10l1.7-3.15z" fill="#2b7be0"/><path d="M612.25 525.70h4.6a2.5 2.65 0 0 1 0 5.3H612.25l1.3-2.65z" fill="#fff" stroke="#a3adbd" stroke-width="1"/><path d="M621.90 525.70h4.6a2.5 2.65 0 0 1 0 5.3H621.90l1.3-2.65z" fill="#f4f4f4" stroke="#e0e0e0" stroke-width="1"/></svg>
<div class="row g" style="top:541.4px;height:25.899999999999977px"></div>
<div class="c b id" style="left:277.5px;top:547.5px">CCR1287</div>
<div class="c b tt" style="left:336px;top:547.5px">Adoption of renewable energy technologies</div>
<div class="c" style="left:645.6px;top:547.5px">02. Quality (QA/RA)</div>
<div class="c" style="left:864px;top:547.5px">Temporary</div>
<div class="c" style="left:926.8px;top:547.5px">Quality, Systems</div>
<div class="c" style="left:1022px;width:75.5px;text-align:center;letter-spacing:0.3px;top:547.5px">4/4/2024</div>
<div class="c" style="left:1105.5px;top:547.5px">Canea Admin</div>
<svg style="left:0;top:0" width="1" height="1"><circle cx="255.7" cy="554.7" r="5.1" fill="none" stroke="#646464" stroke-width="1.1"/><path d="M254.6 552.6l2 2.1-2 2.1" fill="none" stroke="#646464" stroke-width="1"/><path d="M602.10 551.95h5.1a3 3.15 0 0 1 0 6.3H602.10l1.7-3.15z" fill="#2b7be0"/><path d="M612.25 552.45h4.6a2.5 2.65 0 0 1 0 5.3H612.25l1.3-2.65z" fill="#fff" stroke="#a3adbd" stroke-width="1"/><path d="M621.90 552.45h4.6a2.5 2.65 0 0 1 0 5.3H621.90l1.3-2.65z" fill="#f4f4f4" stroke="#e0e0e0" stroke-width="1"/></svg>
<div class="row w" style="top:567.3px;height:35.700000000000045px"></div>
<div class="c b id" style="left:277.5px;top:578.4px">CCR1139</div>
<div class="c b tt" style="left:336px;top:578.4px">Change supplier</div>
<div class="c" style="left:645.6px;top:571.9px">03. Maintain customers &amp; sell products, 09.<br>Finance</div>
<div class="c" style="left:864px;top:578.4px">Temporary</div>
<div class="c" style="left:926.8px;top:578.4px">DWG uppdate</div>
<div class="c" style="left:1022px;width:75.5px;text-align:center;letter-spacing:0.3px;top:578.4px">4/2/2024</div>
<div class="c" style="left:1105.5px;top:578.4px">Jesper</div>
<svg style="left:0;top:0" width="1" height="1"><circle cx="255.7" cy="585.5" r="5.1" fill="none" stroke="#646464" stroke-width="1.1"/><path d="M254.6 583.4l2 2.1-2 2.1" fill="none" stroke="#646464" stroke-width="1"/><path d="M602.10 582.75h5.1a3 3.15 0 0 1 0 6.3H602.10l1.7-3.15z" fill="#2b7be0"/><path d="M611.75 582.75h5.1a3 3.15 0 0 1 0 6.3H611.75l1.7-3.15z" fill="#2b7be0"/><path d="M621.90 583.25h4.6a2.5 2.65 0 0 1 0 5.3H621.90l1.3-2.65z" fill="#fff" stroke="#a3adbd" stroke-width="1"/></svg>
<div class="a" style="left:241px;top:141px;width:1px;height:462px;background:#ececec"></div>
<div class="a" style="left:1189.5px;top:141px;width:1px;height:462px;background:#ececec"></div>
<div class="a" style="left:0;top:601.5px;width:1200px;height:1.5px;background:#e3e3e3"></div>
</body></html>
